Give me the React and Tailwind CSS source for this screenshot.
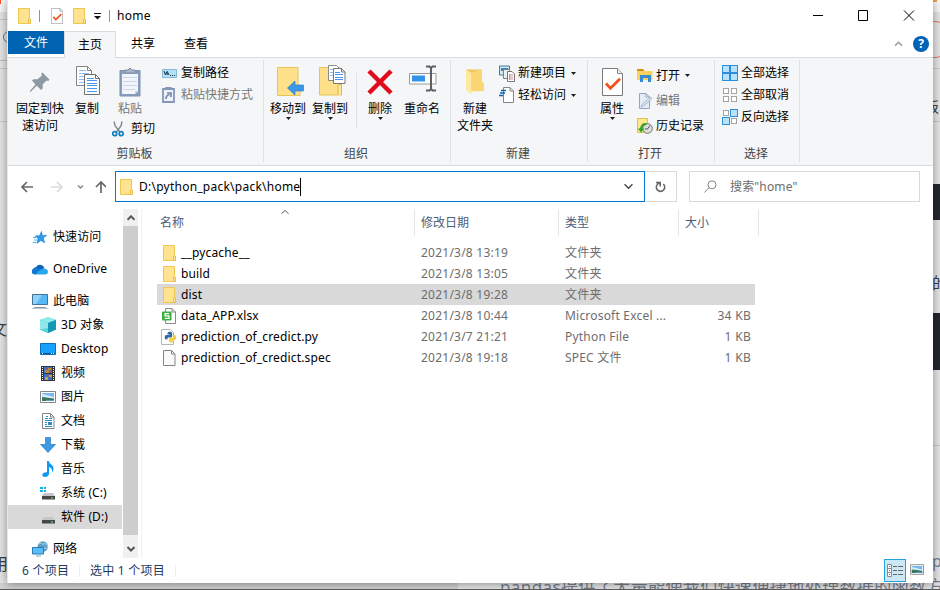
const FolderIcon = ({ className = 'h-4 w-[13px]' }) => (
  <svg className={className} viewBox="0 0 13 16" fill="none" aria-hidden="true">
    <path d="M.5.5h11v10.2l1 1v3.8H.5Z" fill="#ffe391" stroke="#edc750" />
    <path d="M10.5 15.5v-4.3h2v4.3Z" fill="#ffe79d" stroke="#e3b93d" strokeWidth=".8" />
  </svg>
);

const CheckPageIcon = ({ className }) => (
  <svg className={className} viewBox="0 0 21 28" fill="none" aria-hidden="true">
    <path d="M.5.5h15l5 5v22H.5Z" fill="#fff" stroke="#7a7a7a" />
    <path d="M15.5.5v5h5" fill="#eee" stroke="#8a8a8a" />
    <path d="m4 15.5 4.5 4.7 9.5-9.5" stroke="#f1511b" strokeWidth="2.8" />
  </svg>
);

const PageIcon = ({ className = 'h-4 w-[13px]' }) => (
  <svg className={className} viewBox="0 0 13 16" fill="none" aria-hidden="true">
    <path d="M.5.5h8l3.5 3.5v11.5H.5Z" fill="#fafafa" stroke="#858585" />
    <path d="M8.5.5V4H12" stroke="#858585" />
  </svg>
);

const DocumentIcon = () => (
  <svg className="h-4 w-[13px]" viewBox="0 0 13 16" fill="none" aria-hidden="true">
    <path d="M.5.5h8l3.5 3.5v11.5H.5Z" fill="#fff" stroke="#858585" />
    <path d="M8.5.5V4H12" stroke="#858585" />
    <path d="M4 3.500h2M3 5.500h3M7 5.500h3M3 7.500h7M3 9.500h2M3 11.500h2M3 13.500h7" stroke="#2492cf" />
    <path d="M6 9h4v3H6Z" fill="#3f88b5" />
  </svg>
);

const PinIcon = () => (
  <svg className="h-[22px] w-[22px]" viewBox="0 0 22 22" aria-hidden="true">
    <path
      d="m13.5 1.5 7 7-1.2 1.4-1.7-.4-4 4 .2 3.8-1.700 1.700-4.300-4.300L1.500 21l-.8-.8 5.700-6.800L3 9.600l1.700-1.400 3.900.1 4.300-3.900-.7-1.600Z"
      fill="#8f99a1"
    />
  </svg>
);

const CopyPages = ({ className = 'h-[29px] w-6' }) => (
  <svg className={className} viewBox="0 0 24 29" fill="none" aria-hidden="true">
    <path d="M.5.5h11l4 4v15H.5Z" fill="#fff" stroke="#858585" />
    <path d="M11.5.5v4h4" stroke="#858585" />
    <path d="M3 4.500h7M3 7.500h10M3 10.500h6M3 13.500h6M3 16.500h6" stroke="#8ebcf5" />
    <path d="M8.500 8.500h11l4 4v16h-15Z" fill="#fff" stroke="#707070" />
    <path d="M19.500 8.500v4h4" stroke="#707070" />
    <path d="M11 12.500h7M11 14.500h10M11 17.500h10M11 19.500h10M11 22.500h10M11 25.500h10" stroke="#4d94ee" />
  </svg>
);

const PasteIcon = () => (
  <svg className="h-[30px] w-[22px]" viewBox="0 0 22 30" fill="none" aria-hidden="true">
    <path d="M1 3.500h20V29H1Z" fill="#8b9dbd" stroke="#7e91b4" />
    <path d="M3 7h16v17l-3 3H3Z" fill="#f2f5fc" />
    <path d="M4 10.500h14M4 14.500h14M4 18.500h14M4 22.500h12" stroke="#c9d6ec" />
    <path d="M6 6V3h3l2-2 2 2h3v3Z" fill="#a9b5c6" stroke="#8290a6" />
    <path d="M16 27v-3h3" fill="#cbd6e8" />
  </svg>
);

const ScissorsIcon = () => (
  <svg className="h-4 w-3" viewBox="0 0 12 16" fill="none" aria-hidden="true">
    <path d="M2 .5 3.200 5 8 11M10 .5 9 5l-4.700 6" stroke="#7c8791" strokeWidth="1.400" />
    <circle cx="2.700" cy="12.700" r="2" stroke="#117fbd" strokeWidth="1.700" />
    <circle cx="9.200" cy="12.700" r="2" stroke="#117fbd" strokeWidth="1.700" />
  </svg>
);

const PathIcon = () => (
  <svg className="h-[9px] w-[15px]" viewBox="0 0 15 9" fill="none" aria-hidden="true">
    <path d="M.5.5h14v8H.5Z" fill="#b5e0fa" stroke="#84b9d9" />
    <path d="m2 2 1.500 4 1-3 1 3M5 2l2 4M8 6.500h1m1 0h1m1 0h1" stroke="#17354a" />
  </svg>
);

const ShortcutIcon = () => (
  <svg className="h-4 w-[13px]" viewBox="0 0 13 16" fill="none" aria-hidden="true">
    <path d="M1 2h11v13H1Z" fill="#edf2fb" stroke="#8597b7" strokeWidth="1.800" />
    <path d="M4 2V.8h5V2" stroke="#8597b7" strokeWidth="1.500" />
    <path d="M4 12c0-2.500 1-4 3.500-4.500M5 6h4v4" stroke="#7587a9" strokeWidth="1.700" />
  </svg>
);

const MoveToIcon = () => (
  <svg className="ml-1 h-[29px] w-[27px]" viewBox="0 0 27 29" aria-hidden="true">
    <path d="M.5.5h20.500v18l2 1v9H.5Z" fill="#ffe08a" stroke="#e8c452" />
    <path d="m10.500 21 7.500-7v4h8.500v6H18v4Z" fill="#3c98e5" stroke="#2c7fc8" strokeWidth=".7" />
  </svg>
);

const CopyToIcon = () => (
  <svg className="mb-0.5 ml-1 h-[31px] w-[27px]" viewBox="0 0 27 31" fill="none" aria-hidden="true">
    <path d="M.5 2.500h20V20l2 1v9H.5Z" fill="#ffe08a" stroke="#e8c452" />
    <path d="M19 29.500V20l3.500-1v11" fill="#ffe79d" stroke="#e3b93d" />
    <path d="M9.500.5h8l3 3v12h-11Z" fill="#fff" stroke="#8a8a8a" />
    <path d="M11 4.500h4M11 7.500h4M11 10.500h4" stroke="#8ebcf5" />
    <path d="M14.500 3.500h8l3.500 3.500v11.500H14.500Z" fill="#fff" stroke="#777" />
    <path d="M16 7.500h5M16 9.500h8M16 12.500h8M16 14.500h8" stroke="#4d94ee" />
    <path d="M22.500 3.500V7H26" stroke="#777" />
  </svg>
);

const DeleteIcon = () => (
  <svg className="h-[26px] w-[26px]" viewBox="0 0 26 26" aria-hidden="true">
    <path d="m2 2 22 22M24 2 2 24" stroke="#e00b1c" strokeWidth="4.500" />
  </svg>
);

const RenameIcon = () => (
  <svg className="ml-0.5 mt-[-7px] h-[27px] w-7" viewBox="0 0 28 27" fill="none" aria-hidden="true">
    <path d="M.5 8.500h26.500v10.500H.5Z" fill="#fff" stroke="#999" />
    <path d="M3 10.500h13v6H3Z" fill="#3294e7" />
    <path d="M17 1.500h3.500l1.500 1.500 1.500-1.500H27M22 2v22m-5 1.500h3.500l1.500-1.500 1.500 1.500H27" stroke="#5c5f62" strokeWidth="2" />
  </svg>
);

const NewFolderIcon = () => (
  <svg className="h-[27px] w-5" viewBox="0 0 20 27" aria-hidden="true">
    <path d="M1 1.500h16v12l2 2V22H3Z" fill="#efc663" />
    <path d="M1 1.500 6.500 5v21.500L1 22Z" fill="#ffe99f" />
    <path d="M6.500 5 17 1v13l2 2v7l-12.500.5Z" fill="#fbd675" />
  </svg>
);

const NewItemIcon = () => (
  <svg className="h-[17px] w-4" viewBox="0 0 16 17" fill="none" aria-hidden="true">
    <path d="M.5 1h10v9H.5Z" fill="#d1ebfa" stroke="#3e7898" />
    <path d="M2 3h7v3H2Z" fill="#3a82a7" />
    <path d="M4.500 4.500h6v9h-6Z" fill="#eee" stroke="#808080" />
    <path d="M8.500 6.500h4.500l2.500 2.500v7.500h-7Z" fill="#fff" stroke="#777" />
    <path d="M10 10h4M10 12h4M10 14h4" stroke="#d38f9b" />
    <path d="M10.500 9v6" stroke="#6eaee5" />
  </svg>
);

const EasyAccessIcon = () => (
  <svg className="h-4 w-4" viewBox="0 0 16 16" fill="none" aria-hidden="true">
    <path d="M4.500.5H11L14.500 4v11.500h-10Z" fill="#fff" stroke="#858585" />
    <path d="M11 .5V4h3.500" stroke="#858585" />
    <path d="M2 3.500h5M1 6h5M0 8.500h4" stroke="#1762aa" strokeWidth="1.300" />
  </svg>
);

const OpenIcon = () => (
  <svg className="h-[15px] w-4" viewBox="0 0 16 15" aria-hidden="true">
    <path d="M0 1h6l1.500 2H0Z" fill="#d58e08" />
    <path d="M0 3h15.500v9H0Z" fill="#fbd15c" />
    <path d="M3 7h11v7h-3v-4H6v4H3Z" fill="#368bd3" />
  </svg>
);

const EditIcon = () => (
  <svg className="h-4 w-4" viewBox="0 0 16 16" fill="none" aria-hidden="true">
    <path d="M2.500.5H9L12.500 4v11.500h-10Z" fill="#e6ecf7" stroke="#94a4c2" />
    <path d="M9 .5V4h3.500" stroke="#94a4c2" />
    <path d="m4 14 1-2.500L13.500 4l1.500 1.500L6.500 13Z" fill="#dfe6f2" stroke="#97a6bf" strokeWidth=".8" />
  </svg>
);

const HistoryIcon = () => (
  <svg className="h-4 w-4" viewBox="0 0 16 16" fill="none" aria-hidden="true">
    <path d="M.5.5h10v14H.5Z" fill="#ffe78c" stroke="#dfc24b" />
    <circle cx="10.500" cy="10.500" r="4.800" fill="#dedede" stroke="#737373" />
    <path d="M13 7.500 10.500 11H8" stroke="#555" />
    <path d="M3 10.500C3.500 6.500 6 4.500 9.500 5v2C7 7 6 8 5.500 10.500h2L4 14.500.8 10.500Z" fill="#31a52d" />
  </svg>
);

const SelectIcon = ({ kind }) => {
  const on = { all: [0, 1, 2, 3], none: [], invert: [1, 2] }[kind];
  return (
    <svg className="h-4 w-4" viewBox="0 0 16 16" aria-hidden="true">
      {[0, 1, 2, 3].map((n) => {
        const x = (n % 2) * 8;
        const y = n > 1 ? 8 : 0;
        return on.includes(n) ? (
          <rect key={n} x={x + 0.5} y={y + 0.5} width="7" height="7" fill="#b8e2fb" stroke="#2b8fd9" />
        ) : (
          <rect key={n} x={x + 1.5} y={y + 1.5} width="5" height="5" fill="#fff" stroke="#a3a3a3" />
        );
      })}
    </svg>
  );
};

const StarIcon = () => (
  <svg className="h-[13px] w-[14px]" viewBox="0 0 14 13" aria-hidden="true">
    <path d="m8.500.5.8 3.900h4.200L10.300 7l1.300 4.700-3.700-2.300-4 3L5.100 7.800 2.300 4.900l4.200-.2Z" fill="#2c9ced" stroke="#1778c8" strokeWidth=".6" />
    <path d="M0 6.500h3M1 9h3M0 11.500h3" stroke="#4baaf0" />
  </svg>
);

const CloudIcon = () => (
  <svg className="h-[11px] w-4" viewBox="0 0 16 11" aria-hidden="true">
    <path d="M4 3.200A4.600 4.600 0 0 1 12.400 4l-5 3L1 6.500C.8 4.500 2 3.300 4 3.200Z" fill="#0a63b8" />
    <path d="M2.500 10.500A3 3 0 0 1 1 5C3 3.200 5 3.400 7 4.800l6 4Z" fill="#1278cf" />
    <path d="M3 10.500c3-2 5.500-6.500 9.500-6 2 .3 3.500 1.500 3.500 3.500a2.600 2.600 0 0 1-2.500 2.500Z" fill="#28a8ea" />
  </svg>
);

const PcIcon = () => (
  <svg className="h-4 w-4" viewBox="0 0 16 16" aria-hidden="true">
    <path d="M.5 1.500h15v10H.5Z" fill="#58b9f5" stroke="#43718f" />
    <path d="M1 2h9L4 11H1Z" fill="#8ed3fb" />
    <path d="M2 14.500h12" stroke="#8d9daa" />
    <path d="M0 15.500h16" stroke="#b7c3cc" />
  </svg>
);

const CubeIcon = () => (
  <svg className="h-4 w-4" viewBox="0 0 16 16" aria-hidden="true">
    <path d="M0 3 8 .3 16 3v9.500L8 16l-8-3.500Z" fill="#1faec1" />
    <path d="m0 3 8-2.700L16 3 8 6Z" fill="#8eecec" />
    <path d="m0 3 8 3v10l-8-3.500Z" fill="#54d5dc" />
    <path d="m8 6 8-3v9.500L8 16Z" fill="#1597b5" />
    <path d="m0 3 8 3v5l-8 1.500Z" fill="#baf4f1" opacity=".6" />
  </svg>
);

const DesktopIcon = () => (
  <svg className="h-3 w-4" viewBox="0 0 16 12" aria-hidden="true">
    <path d="M.5.5h15v11H.5Z" fill="#15a2fd" stroke="#0871bd" />
    <path d="M1 10.500h14" stroke="#055491" />
    <path d="M2 10.500h1m8 0h1m1 0h1" stroke="#fff" />
  </svg>
);

const VideoIcon = () => (
  <svg className="h-[15px] w-[14px]" viewBox="0 0 14 15" aria-hidden="true">
    <path d="M0 0h14v15H0Z" fill="#343434" />
    <path d="M3 1h8v6H3Z" fill="#4171c8" />
    <path d="M3 8h8v6H3Z" fill="#3f6ec9" />
    <path d="M4 4h4v3H4Zm3-2h3v2H7Z" fill="#b48c38" />
    <path d="M4 11h3v3H4Zm4-2h3v2H8Z" fill="#d1a13b" />
    <path d="M5 3h2M8 6h2M6 10h2" stroke="#c94444" />
    <path d="M1.500 1v14M12.500 1v14" stroke="#eee" strokeDasharray="1 1" />
  </svg>
);

const PictureIcon = ({ className = 'h-3 w-4' }) => (
  <svg className={className} viewBox="0 0 16 12" aria-hidden="true">
    <path d="M.5.5h15v11H.5Z" fill="#fff" stroke="#858585" />
    <path d="M2 2h12v8H2Z" fill="#79b7ed" />
    <path d="M2 3c5 1 8 2 12 3v1H2Z" fill="#d6ecfa" />
    <path d="M2 6c4 0 7 1 12 2v2H2Z" fill="#39755f" />
    <path d="M6 9.500h8" stroke="#5ba2c1" />
  </svg>
);

const DownloadIcon = () => (
  <svg className="h-4 w-4" viewBox="0 0 16 16" aria-hidden="true">
    <path d="M5.500.5h5v7h5L8 15.500.5 7.500h5Z" fill="#3d98e5" stroke="#347fbd" strokeWidth=".7" />
  </svg>
);

const MusicIcon = () => (
  <svg className="h-4 w-3" viewBox="0 0 12 16" aria-hidden="true">
    <path d="M5 0h1.800c.3 3 4.700 3.500 4.700 7.500 0 1.500-.7 3-1.500 4 .5-3.500-.7-4.500-3-5.500v7c0 1.500-1.700 3-4 3C1.300 16 .3 15.300.3 14c0-1.500 1.700-2.800 4.700-2.700Z" fill="#0c9af2" />
  </svg>
);

const DriveIcon = ({ system }) => (
  <svg className="h-4 w-4" viewBox="0 0 16 16" aria-hidden="true">
    {system ? <path d="M0 2h3v2H0Zm4 0h2v2H4ZM0 5h3v2H0Zm4 0h2v2H4Z" fill="#11b5e4" /> : null}
    <path d="M4 8h9l2 3H2Z" fill="#c4c6c8" />
    <path d="M2 11h13v3.500H2Z" fill="#454749" />
    <path d="M11 13h2" stroke="#6bf36f" />
  </svg>
);

const NetworkIcon = () => (
  <svg className="h-4 w-4" viewBox="0 0 16 16" aria-hidden="true">
    <circle cx="10.800" cy="5.500" r="5.200" fill="#5b9fc7" />
    <path d="M7 3c3-2 3 1 5 0s3 1 4 3M8 8c2-3 4 0 7-1" stroke="#b8dced" fill="none" />
    <path d="M.5 6.500h11V13H.5Z" fill="#58bdfa" stroke="#287fae" />
    <path d="M4 15h5" stroke="#83a4b7" />
  </svg>
);

const ExcelIcon = () => (
  <svg className="h-4 w-[14px]" viewBox="0 0 14 16" fill="none" aria-hidden="true">
    <path d="M3.500.5H10L13.500 4v11.500h-10Z" fill="#fff" stroke="#8a8a8a" />
    <path d="M10 .5V4h3.500" stroke="#8a8a8a" />
    <rect y="3.500" width="9.500" height="9" rx="1" fill="#3aaf42" />
    <path d="M7 5.700H3v2.200h4v2.400H2.800" stroke="#fff" strokeWidth="1.200" />
  </svg>
);

const PythonIcon = () => (
  <svg className="h-4 w-4" viewBox="0 0 16 16" fill="none" aria-hidden="true">
    <path d="M.5.5h9l3 3v12H.5Z" fill="#fff" stroke="#b5b5b5" />
    <path d="M6.500 4.500c0-1.200.8-1.700 2.300-1.700s2.400.5 2.400 1.700V7c0 1-.8 1.500-1.700 1.500H7.800c-1 0-1.500.5-1.500 2h-.8c-1.300 0-1.800-1-1.800-2.300s.6-2.200 2-2.200h3v-.5H6.500Z" fill="#31699c" />
    <path d="M12.200 6h1c1.500 0 2 1 2 2.300s-.5 2.700-2 2.700h-2.700v.5h2.200c0 1.500-1 2-2.200 2s-2.600-.5-2.600-1.800V10c0-.9.8-1.200 1.800-1.200h1c1 0 1.500-.6 1.500-1.800Z" fill="#f8ca3d" />
  </svg>
);

const Caret = () => (
  <svg className="h-[3px] w-[5px]" viewBox="0 0 5 3" aria-hidden="true">
    <path d="M0 0h5L2.500 3Z" fill="#1e1e1e" />
  </svg>
);

const Chevron = ({ up, className = 'h-1.5 w-2', color = '#555', width = 1.5 }) => (
  <svg className={className} viewBox="0 0 8 6" fill="none" aria-hidden="true">
    <path d={up ? 'm.5 4.800 3.500-3.500 3.500 3.500' : 'm.5 1 3.500 3.500L7.500 1'} stroke={color} strokeWidth={width} />
  </svg>
);

const Group = ({ label, className, children }) => (
  <section className={`flex shrink-0 flex-col ${className}`}>
    <div className="flex min-h-0 flex-1">{children}</div>
    <div className="mb-0.5 mr-0.5 h-[18px] text-center leading-[18px] text-[#444]">{label}</div>
  </section>
);

const BigButton = ({ icon, label, second, caret, muted, className }) => (
  <button className={`flex flex-col items-center pt-1.5 ${muted ? 'text-[#777]' : ''} ${className}`} type="button">
    <span className="mb-px flex h-[35px] items-center justify-center">{icon}</span>
    <span className="whitespace-nowrap leading-[18px]">{label}</span>
    {second ? <span className="-mt-px whitespace-nowrap leading-[18px]">{second}</span> : null}
    {caret ? <span className="-mt-px flex"><Caret /></span> : null}
  </button>
);

const SmallButton = ({ icon, label, caret, muted, className = 'h-[22px]' }) => (
  <button className={`flex items-center whitespace-nowrap ${muted ? 'text-[#777]' : ''} ${className}`} type="button">
    <span className="flex w-[19px] items-center">{icon}</span>
    {label}
    {caret ? <span className="ml-[5px]"><Caret /></span> : null}
  </button>
);

const Separator = ({ className = 'h-[102px]' }) => (
  <div className={`w-px shrink-0 bg-[#dfe1e4] ${className}`} />
);

const tree = [
  { label: '快速访问', icon: <StarIcon />, className: 'mt-4 pl-[24px]' },
  { label: 'OneDrive', icon: <CloudIcon />, className: 'mt-2 pl-[24px]' },
  { label: '此电脑', icon: <PcIcon />, className: 'mt-2 pl-[24px]' },
  { label: '3D 对象', icon: <CubeIcon />, className: 'pl-8' },
  { label: 'Desktop', icon: <DesktopIcon />, className: 'pl-8' },
  { label: '视频', icon: <VideoIcon />, className: 'pl-8' },
  { label: '图片', icon: <PictureIcon />, className: 'pl-8' },
  { label: '文档', icon: <DocumentIcon />, className: 'pl-8' },
  { label: '下载', icon: <DownloadIcon />, className: 'pl-8' },
  { label: '音乐', icon: <MusicIcon />, className: 'pl-8' },
  { label: '系统 (C:)', icon: <DriveIcon system />, className: 'pl-8' },
  { label: '软件 (D:)', icon: <DriveIcon />, className: 'bg-[#d9d9d9] pl-8' },
  { label: '网络', icon: <NetworkIcon />, className: 'mt-2 pl-[24px]' },
];

const files = [
  { name: '__pycache__', icon: <FolderIcon />, date: '2021/3/8 13:19', type: '文件夹' },
  { name: 'build', icon: <FolderIcon />, date: '2021/3/8 13:05', type: '文件夹' },
  { name: 'dist', icon: <FolderIcon />, date: '2021/3/8 19:28', type: '文件夹', selected: true },
  { name: 'data_APP.xlsx', icon: <ExcelIcon />, date: '2021/3/8 10:44', type: 'Microsoft Excel ...', size: '34 KB' },
  { name: 'prediction_of_credict.py', icon: <PythonIcon />, date: '2021/3/7 21:21', type: 'Python File', size: '1 KB' },
  { name: 'prediction_of_credict.spec', icon: <PageIcon />, date: '2021/3/8 19:18', type: 'SPEC 文件', size: '1 KB' },
];

function Backdrop() {
  return (
    <div className="absolute inset-0 overflow-hidden bg-[#e5e5e5] text-base leading-5 text-[#3c3f46]" aria-hidden="true">
      <div className="absolute left-0 top-0 h-3 w-full bg-[#f7f7f7]" />
      <div className="absolute left-0 top-0 h-1 w-px bg-[#ff4b1f]" />
      <div className="absolute left-0 top-[19px] h-px w-2 bg-[#c6c6c6]" />
      <div className="absolute left-[3px] top-[31px] h-3 w-6 rounded-full border border-[#777]" />
      <div className="absolute left-0 top-[60px] h-px w-2 bg-[#bdbdbd]" />
      <div className="absolute left-0 top-[68px] h-px w-full bg-[#cbcbcb]" />
      <div className="absolute left-0 top-[121px] h-px w-full bg-[#c7c7c7]" />
      <div className="absolute left-[905px] top-[21px] h-[37px] w-12 rounded-full border border-[#ee6d55]" />
      <div className="absolute left-[933px] top-0 h-0.5 w-1 bg-[#e9a14a]" />
      <div className="absolute left-[933px] top-[184px] h-9 w-2 bg-[#242730]" />
      <div className="absolute left-[933px] top-[313px] h-[57px] w-2 bg-[#242730]" />
      <div className="absolute left-[933px] top-[445px] h-px w-2 bg-[#c7c7c7]" />
      <span className="absolute -left-[9px] top-[319px]">文</span>
      <span className="absolute -left-[8px] top-[554px]">用</span>
      <span className="absolute left-[925px] top-[97px] text-sm">板</span>
      <span className="absolute left-[932px] top-[273px]">的</span>
      <span className="absolute left-[932px] top-[551px] text-[#777d8d]">p</span>
      <div className="absolute left-0 top-[583px] h-1.5 w-[458px] bg-[#d2d2d2]" />
      <p className="absolute left-[500px] top-[577px] whitespace-nowrap text-[17px] tracking-[0.4px] text-[#777d8d]">
        pandas提供了大量能使我们快速便捷地处理数据的函数方
      </p>
      <div className="absolute bottom-0 left-0 h-px w-full bg-[#5f5f5f]" />
    </div>
  );
}

function TitleBar() {
  return (
    <header className="flex h-[31px] shrink-0 items-center pl-[10px]">
      <FolderIcon />
      <div className="ml-2 h-3 w-px bg-[#929292]" />
      <CheckPageIcon className="ml-[11px] h-4 w-3" />
      <FolderIcon className="ml-[10px] h-4 w-[13px]" />
      <svg className="ml-2 mt-0.5 h-[7px] w-[7px]" viewBox="0 0 7 7" aria-hidden="true">
        <path d="M0 .5h7" stroke="#111" />
        <path d="M0 3h7L3.500 6.500Z" fill="#111" />
      </svg>
      <div className="ml-2 h-3 w-px bg-[#929292]" />
      <span className="ml-[7px] pt-px text-[12px] tracking-[0.300px]">home</span>
      <div className="ml-auto mr-[18px] flex items-center">
        <svg className="h-[11px] w-[102px]" viewBox="0 0 102 11" fill="none" stroke="#000" aria-hidden="true">
          <path d="M0 5.500h10M45.500.5h9v10h-9ZM91 .5l10 10m0-10-10 10" />
        </svg>
      </div>
    </header>
  );
}

function Tabs() {
  return (
    <nav className="flex h-[27px] shrink-0 border-b border-[#dadbdc] text-center leading-6">
      <button className="h-[23px] w-14 bg-[#0063b1] text-white" type="button">文件</button>
      <button className="h-[27px] w-[52px] border border-b-0 border-[#dadbdc] bg-[#f5f6f7]" type="button">主页</button>
      <button className="ml-[14px] w-[26px]" type="button">共享</button>
      <button className="ml-[27px] w-[26px]" type="button">查看</button>
      <div className="ml-auto mr-1 flex items-center">
        <Chevron up className="mr-[10px] h-1.5 w-[9px]" color="#999" />
        <span className="flex h-4 w-4 items-center justify-center rounded-full bg-[#0063b7] text-[12px] font-bold text-white">?</span>
      </div>
    </nav>
  );
}

function Ribbon() {
  return (
    <div className="flex h-[108px] shrink-0 items-start border-b border-[#dadbdc] bg-[#f5f6f7]">
      <Group label="剪贴板" className="h-[107px] w-[255px]">
        <BigButton icon={<PinIcon />} label="固定到快" second="速访问" className="w-16" />
        <BigButton icon={<CopyPages className="ml-0.5 mt-[-3px] h-[29px] w-6" />} label="复制" className="w-[30px]" />
        <div className="flex w-14 flex-col">
          <BigButton icon={<PasteIcon />} label="粘贴" muted className="ml-px w-[54px]" />
          <SmallButton icon={<ScissorsIcon />} label="剪切" className="ml-2.5 h-[22px] w-11" />
        </div>
        <div className="pl-1 pt-1">
          <SmallButton icon={<PathIcon />} label="复制路径" />
          <SmallButton icon={<ShortcutIcon />} label="粘贴快捷方式" muted />
        </div>
      </Group>
      <Separator className="mt-0.5 h-[102px]" />
      <Group label="组织" className="h-[107px] w-[186px]">
        <BigButton icon={<MoveToIcon />} label="移动到" caret className="ml-[3px] w-[42px]" />
        <BigButton icon={<CopyToIcon />} label="复制到" caret className="w-[42px]" />
        <Separator className="ml-[5px] mt-[15px] h-[55px]" />
        <BigButton icon={<DeleteIcon />} label="删除" caret className="ml-[5px] w-9" />
        <BigButton icon={<RenameIcon />} label="重命名" className="w-12" />
      </Group>
      <Separator className="mt-0.5 h-[102px]" />
      <Group label="新建" className="h-[107px] w-[136px]">
        <BigButton icon={<NewFolderIcon />} label="新建" second="文件夹" className="w-12" />
        <div className="pt-1">
          <SmallButton icon={<NewItemIcon />} label="新建项目" caret />
          <SmallButton icon={<EasyAccessIcon />} label="轻松访问" caret />
        </div>
      </Group>
      <Separator className="mt-0.5 h-[102px]" />
      <Group label="打开" className="h-[107px] w-[126px]">
        <BigButton icon={<CheckPageIcon className="h-7 w-[21px]" />} label="属性" caret className="ml-0.5 w-11" />
        <div className="pl-[3px] pt-[5px]">
          <SmallButton icon={<OpenIcon />} label="打开" caret className="h-[25px]" />
          <SmallButton icon={<EditIcon />} label="编辑" muted className="h-[25px]" />
          <SmallButton icon={<HistoryIcon />} label="历史记录" className="h-[25px]" />
        </div>
      </Group>
      <Separator className="mt-0.5 h-[102px]" />
      <Group label="选择" className="h-[107px] w-[84px]">
        <div className="pl-[7px] pt-1">
          <SmallButton icon={<SelectIcon kind="all" />} label="全部选择" />
          <SmallButton icon={<SelectIcon kind="none" />} label="全部取消" />
          <SmallButton icon={<SelectIcon kind="invert" />} label="反向选择" />
        </div>
      </Group>
      <Separator className="mt-0.5 h-[102px]" />
    </div>
  );
}

function AddressBar() {
  return (
    <div className="flex h-[43px] shrink-0 items-start pl-[13px] pt-[5px]">
      <div className="flex h-[31px] w-[94px] items-center">
        <svg className="h-3 w-[85px]" viewBox="0 0 85 12" fill="none" aria-hidden="true">
          <path d="M12 6H1m5-5L1 6l5 5" stroke="#686868" strokeWidth="1.700" />
          <path d="M30 6h11m-5-5 5 5-5 5" stroke="#dadada" strokeWidth="1.700" />
          <path d="m57 4.500 2.500 2.500L62 4.500" stroke="#888" strokeWidth="1.500" />
          <path d="M80 12V1m-5 5 5-5 5 5" stroke="#686868" strokeWidth="1.700" />
        </svg>
      </div>
      <div className="flex h-[31px] w-[530px] items-center border border-[#0078d7] pl-1">
        <FolderIcon />
        <span className="ml-1.5 tracking-[0.240px]">D:\python_pack\pack\home</span>
        <span className="h-[18px] w-px bg-black" />
        <Chevron className="ml-auto mr-[11px] h-[7px] w-[9px]" color="#444" width={1.2} />
      </div>
      <button className="flex h-[31px] w-8 items-center justify-center border border-l-0 border-[#d9d9d9]" type="button" aria-label="刷新">
        <svg className="h-3 w-[11px]" viewBox="0 0 11 12" fill="none" aria-hidden="true">
          <path d="M8.300 3A4.200 4.200 0 1 1 2.500 3.200L5 1.500M1 1.500h4.200v4" stroke="#686868" strokeWidth="1.600" />
        </svg>
      </button>
      <div className="ml-3 flex h-[31px] w-[231px] items-center border border-[#d9d9d9] pl-[14px] text-[#6d6d6d]">
        <svg className="h-[13px] w-[13px]" viewBox="0 0 13 13" fill="none" stroke="#888" aria-hidden="true">
          <circle cx="8" cy="4.800" r="4" />
          <path d="M5 7.700.5 12.500" />
        </svg>
        <span className="ml-[13px] tracking-[0.150px]">搜索"home"</span>
      </div>
    </div>
  );
}

function Sidebar() {
  return (
    <aside className="flex w-[134px] shrink-0 border-r border-[#f2f2f2]">
      <div className="w-[114px] overflow-hidden">
        {tree.map((item) => (
          <div className={`flex h-6 items-center whitespace-nowrap tracking-[0.1px] ${item.className}`} key={item.label}>
            <span className="mr-[5px] flex w-4 shrink-0 justify-center">{item.icon}</span>
            {item.label}
          </div>
        ))}
      </div>
      <div className="ml-px flex w-[15px] flex-col bg-[#f0f0f0]">
        <div className="flex h-[17px] items-center justify-center"><Chevron up width={2} /></div>
        <div className="h-[309px] bg-[#cdcdcd]" />
        <div className="flex flex-1 items-center justify-center pt-1"><Chevron width={2} /></div>
      </div>
    </aside>
  );
}

function FileList() {
  return (
    <main className="flex-1 pl-[15px]">
      <div className="relative flex h-[27px] leading-[27px] text-[#4c607a]">
        <div className="w-[258px] border-r border-[#e5e5e5] pl-[3px]">名称</div>
        <div className="w-36 border-r border-[#e5e5e5] pl-[6px]">修改日期</div>
        <div className="w-[120px] border-r border-[#e5e5e5] pl-[6px]">类型</div>
        <div className="w-20 border-r border-[#e5e5e5] pl-[6px]">大小</div>
        <span className="absolute left-[124px] top-0 flex"><Chevron up width={1} /></span>
      </div>
      <div className="mt-1.5">
        {files.map((file) => (
          <div
            className={`flex h-[21px] w-[598px] items-center whitespace-nowrap ${file.selected ? 'bg-[#d9d9d9]' : ''}`}
            key={file.name}
          >
            <span className="flex w-6 shrink-0 justify-center">{file.icon}</span>
            <span className="w-[240px] tracking-[0.150px]">{file.name}</span>
            <span className="w-36 tracking-[0.230px] text-[#6d6d6d]">{file.date}</span>
            <span className="w-[120px] tracking-[0.200px] text-[#6d6d6d]">{file.type}</span>
            <span className="w-[66px] text-right tracking-[0.300px] text-[#6d6d6d]">{file.size}</span>
          </div>
        ))}
      </div>
    </main>
  );
}

function StatusBar() {
  return (
    <footer className="flex h-[25px] shrink-0 items-center pl-[14px] text-[#1f3a5f]">
      <span className="w-[57px] tracking-[0.250px]">6 个项目</span>
      <span className="h-3 w-px bg-[#ededed]" />
      <span className="ml-[10px] w-[85px] tracking-[0.250px]">选中 1 个项目</span>
      <span className="h-3 w-px bg-[#ededed]" />
      <span className="ml-auto flex h-[23px] w-[22px] items-center justify-center border border-[#26a0da] bg-[#cbe8f6]">
        <svg className="h-[13px] w-4" viewBox="0 0 16 13" fill="none" aria-hidden="true">
          <path d="M.5.5h4v12h-4Zm0 4h4m-4 4h4" fill="#fff" stroke="#8b8b8b" />
          <path d="M6 2.500h4m1 0h5m-10 4h4m1 0h5m-10 4h4m1 0h5" stroke="#666" />
          <path d="M2 2.500h1" stroke="#338a34" />
          <path d="M2 6.500h1" stroke="#237bd6" />
          <path d="M2 10.500h1" stroke="#e32828" />
        </svg>
      </span>
      <PictureIcon className="mb-0.5 ml-1 mr-[9px] h-[11px] w-[14px]" />
    </footer>
  );
}

export default function App() {
  return (
    <div className="relative h-[590px] w-[940px] overflow-hidden font-['Noto_Sans','Noto_Sans_CJK_SC',sans-serif] text-xs text-black">
      <Backdrop />
      <div className="relative ml-[7px] flex h-[583px] w-[926px] flex-col border-l border-[#e9e9e9] bg-white shadow-[0_1px_9px_rgba(0,0,0,0.4)]">
        <TitleBar />
        <Tabs />
        <Ribbon />
        <AddressBar />
        <div className="flex h-[349px] shrink-0">
          <Sidebar />
          <FileList />
        </div>
        <StatusBar />
      </div>
    </div>
  );
}
